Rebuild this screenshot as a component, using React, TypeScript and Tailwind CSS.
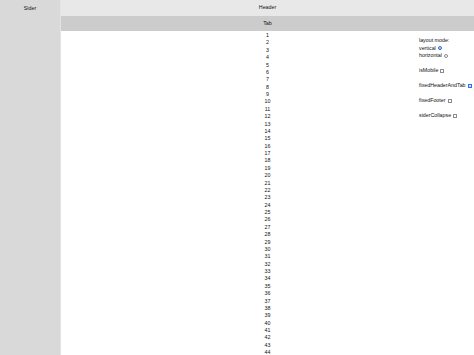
import { useState } from "react";

const lines = Array.from({ length: 44 }, (_, i) => i + 1);

const radioCls =
  "m-0 h-[4px] w-[4px] shrink-0 appearance-none rounded-full border-[0.5px] border-[#8a8a8a] bg-white checked:border-[#2f6fe4] checked:bg-[#2f6fe4] checked:shadow-[inset_0_0_0_0.8px_#ffffff]";
const checkCls =
  "m-0 h-[4px] w-[4px] shrink-0 appearance-none rounded-[0.5px] border-[0.5px] border-[#8a8a8a] bg-white checked:border-[#2f6fe4] checked:bg-[#2f6fe4] checked:shadow-[inset_0_0_0_0.6px_#ffffff]";

export default function App() {
  const [mode, setMode] = useState("vertical");
  const [flags, setFlags] = useState({
    isMobile: false,
    fixedHeaderAndTab: true,
    fixedFooter: false,
    siderCollapse: false,
  });

  const toggle = (k: keyof typeof flags) =>
    setFlags((prev) => ({ ...prev, [k]: !prev[k] }));

  return (
    <div className="flex h-[355px] w-[474px] overflow-hidden font-['Liberation_Sans',Arial,sans-serif] text-[5.3px] text-[#111]">
      <aside className="flex w-[61px] shrink-0 justify-center border-r border-[#e4e4e4] bg-[#d9d9d9] pt-[5px] leading-[7px]">
        Sider
      </aside>

      <div className="flex flex-1 flex-col">
        <header className="flex h-[16px] shrink-0 items-center justify-center bg-[#e8e8e8]">
          Header
        </header>
        <div className="flex h-[15px] shrink-0 items-center justify-center bg-[#cccccc]">
          Tab
        </div>

        <main className="relative flex-1 bg-white">
          <div className="flex flex-col items-center pt-[1px] leading-[7.37px]">
            {lines.map((n) => (
              <div key={n}>{n}</div>
            ))}
          </div>

          <div className="absolute left-[358px] top-[6px] flex flex-col leading-[7.5px]">
            <div>layout mode:</div>
            <label className="flex items-center gap-[2px]">
              vertical
              <input
                type="radio"
                checked={mode === "vertical"}
                onChange={() => setMode("vertical")}
                className={radioCls}
              />
            </label>
            <label className="flex items-center gap-[2px]">
              horizontal
              <input
                type="radio"
                checked={mode === "horizontal"}
                onChange={() => setMode("horizontal")}
                className={radioCls}
              />
            </label>

            {(Object.keys(flags) as (keyof typeof flags)[]).map((k) => (
              <label key={k} className="mt-[7.5px] flex items-center gap-[2px]">
                {k}
                <input
                  type="checkbox"
                  checked={flags[k]}
                  onChange={() => toggle(k)}
                  className={checkCls}
                />
              </label>
            ))}
          </div>
        </main>
      </div>
    </div>
  );
}
